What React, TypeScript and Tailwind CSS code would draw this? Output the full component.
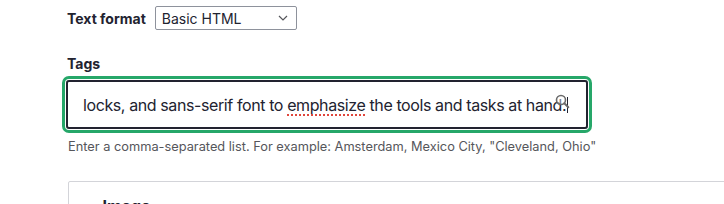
// React Imports
import { FC } from "react";

/**
 * @description Small chevron used by the text format select.
 */
const Chevron: FC = () => (
  <svg width="10" height="6" viewBox="0 0 10 6" fill="none" className="text-[#55565b]">
    <path d="M1 1l4 4 4-4" stroke="currentColor" strokeWidth="1.2" />
  </svg>
);

/**
 * @description Mouse pointer (zoom) cursor hovering over the input.
 */
const ZoomCursor: FC = () => (
  <svg width="16" height="16" viewBox="0 0 16 16" fill="none" className="absolute left-[555px] top-[94px]">
    <circle cx="6" cy="6" r="4.5" stroke="#6b6b6b" strokeWidth="1.6" fill="rgba(255,255,255,0.4)" />
    <path d="M9.3 9.3l4 4" stroke="#6b6b6b" strokeWidth="2" strokeLinecap="round" />
  </svg>
);

export default function App() {
  return (
    <div className="relative h-[204px] w-[724px] overflow-hidden bg-white font-['Inter',sans-serif] text-[#222330]">
      <div className="pl-[66px] pt-[6px]">
        {/* Text format */}
        <div className="flex items-center">
          <span className="pl-px text-[14px] font-bold">Text format</span>
          <div className="ml-[9px] flex h-[24px] w-[142px] items-center justify-between rounded-[2px] border border-[#8e929c] pl-[6px] pr-[8px] text-[14px]">
            <span>Basic HTML</span>
            <Chevron />
          </div>
        </div>

        {/* Tags */}
        <div className="mt-[24px] pl-px text-[14px] leading-[20px] font-bold">Tags</div>
        <div className="mt-[6px] flex h-[49px] w-[522px] items-center overflow-hidden rounded-[3px] border-2 border-[#222330] pl-[15px] text-[16px] tracking-[-0.4px] whitespace-nowrap shadow-[0_0_0_1px_#fff,0_0_0_4px_#26a769]">
          <span>
            locks, and sans-serif font to{" "}
            <span className="underline decoration-[#e0463c] decoration-dotted decoration-2 underline-offset-[4px]">emphasize</span>{" "}
            the tools and tasks at hand.
          </span>
          <span className="ml-px h-[16px] w-px bg-[#222330]" />
        </div>
        <div className="mt-[10px] pl-[2px] text-[12.8px] leading-[16px] text-[#55565b]">
          Enter a comma-separated list. For example: Amsterdam, Mexico City, "Cleveland, Ohio"
        </div>

        {/* Image details */}
        <div className="mt-[26px] ml-[2px] h-[40px] w-[700px] rounded-tl-[2px] border border-[#d3d4d9] pt-[12px] pl-[16px] text-[16px] font-bold">
          <span className="mr-[8px] text-[10px]">▶</span>Image
        </div>
      </div>
      <ZoomCursor />
    </div>
  );
}
